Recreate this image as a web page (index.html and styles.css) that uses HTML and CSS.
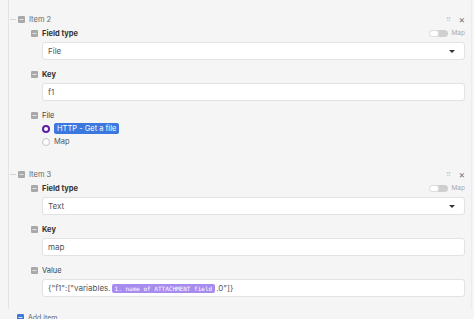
FILE: index.html
```html
<!DOCTYPE html>
<html lang="en">
<head>
  <meta charset="UTF-8" />
  <meta name="viewport" content="width=device-width, initial-scale=1.0" />
  <title>Collection items</title>
  <link rel="stylesheet" href="styles.css">
</head>
<body>
  <div class="list">
    <div class="item">
      <div class="item-head">
        <span class="branch"></span>
        <svg class="fold" viewBox="0 0 7 7"><rect width="7" height="7" rx="1" fill="#a9a9a9"/><rect x="1.5" y="3" width="4" height="1" fill="#e4e4e4"/></svg>
        <span class="item-title">Item 2</span>
        <span class="item-actions"><span class="handle">⠿</span><span class="close">×</span></span>
      </div>
      <div class="field">
        <div class="field-head">
          <svg class="fold" viewBox="0 0 7 7"><rect width="7" height="7" rx="1" fill="#a9a9a9"/><rect x="1.5" y="3" width="4" height="1" fill="#e4e4e4"/></svg>
          <span class="label bold">Field type</span>
          <span class="map"><span class="switch"><span class="knob"></span></span>Map</span>
        </div>
        <div class="input select">File<span class="caret"></span></div>
      </div>
      <div class="field">
        <div class="field-head">
          <svg class="fold" viewBox="0 0 7 7"><rect width="7" height="7" rx="1" fill="#a9a9a9"/><rect x="1.5" y="3" width="4" height="1" fill="#e4e4e4"/></svg>
          <span class="label bold">Key</span>
        </div>
        <div class="input">f1</div>
      </div>
      <div class="field">
        <div class="field-head radios-head">
          <svg class="fold" viewBox="0 0 7 7"><rect width="7" height="7" rx="1" fill="#a9a9a9"/><rect x="1.5" y="3" width="4" height="1" fill="#e4e4e4"/></svg>
          <span class="label">File</span>
        </div>
        <div class="radios">
          <div class="radio-row"><span class="radio checked"></span><span class="module">HTTP - Get a file</span></div>
          <div class="radio-row"><span class="radio"></span><span class="radio-text">Map</span></div>
        </div>
      </div>
    </div>

    <div class="item">
      <div class="item-head">
        <span class="branch"></span>
        <svg class="fold" viewBox="0 0 7 7"><rect width="7" height="7" rx="1" fill="#a9a9a9"/><rect x="1.5" y="3" width="4" height="1" fill="#e4e4e4"/></svg>
        <span class="item-title">Item 3</span>
        <span class="item-actions"><span class="handle">⠿</span><span class="close">×</span></span>
      </div>
      <div class="field">
        <div class="field-head">
          <svg class="fold" viewBox="0 0 7 7"><rect width="7" height="7" rx="1" fill="#a9a9a9"/><rect x="1.5" y="3" width="4" height="1" fill="#e4e4e4"/></svg>
          <span class="label bold">Field type</span>
          <span class="map"><span class="switch"><span class="knob"></span></span>Map</span>
        </div>
        <div class="input select">Text<span class="caret"></span></div>
      </div>
      <div class="field">
        <div class="field-head">
          <svg class="fold" viewBox="0 0 7 7"><rect width="7" height="7" rx="1" fill="#a9a9a9"/><rect x="1.5" y="3" width="4" height="1" fill="#e4e4e4"/></svg>
          <span class="label bold">Key</span>
        </div>
        <div class="input">map</div>
      </div>
      <div class="field">
        <div class="field-head">
          <svg class="fold" viewBox="0 0 7 7"><rect width="7" height="7" rx="1" fill="#a9a9a9"/><rect x="1.5" y="3" width="4" height="1" fill="#e4e4e4"/></svg>
          <span class="label">Value</span>
        </div>
        <div class="input">{"f1":["variables.<span class="pill">1. name of ATTACHMENT field</span>.0"]}</div>
      </div>
    </div>
  </div>

  <div class="add-item">
    <svg class="fold" viewBox="0 0 7 7"><rect width="7" height="7" rx="1" fill="#3f7bd6"/><rect x="1.5" y="3" width="4" height="1" fill="#cfe0fa"/></svg>
    <span>Add item</span>
  </div>
</body>
</html>
```

FILE: styles.css
```css
body {
  margin: 0;
  background-color: #f5f5f5;
  font-family: Inter, 'Noto Sans', sans-serif;
  font-size: 7.5px;
  color: #444;
  overflow: hidden;
}
.list {
  margin: 0 2px 0 8px;
  padding: 12px 0 12px;
  border-left: 1px solid #e3e3e3;
  border-right: 1px solid #ececec;
}
.fold {
  width: 7px;
  height: 7px;
  flex: none;
}
.item {
  padding-bottom: 19px;
}
.item:last-child {
  padding-bottom: 0;
}
.item-head {
  display: flex;
  align-items: center;
  height: 14px;
  padding-right: 6px;
}
.branch {
  width: 6px;
  height: 1px;
  margin: 0 2px 0 1px;
  background-color: #d6d6d6;
}
.item-title {
  margin-left: 4px;
  color: #666;
}
.item-actions {
  margin-left: auto;
  display: flex;
  align-items: center;
  gap: 7px;
  color: #9a9a9a;
}
.handle {
  font-size: 7px;
  color: #c6c6c6;
}
.close {
  font-size: 10px;
  color: #777;
}
.field {
  padding-left: 22px;
  margin-top: 7px;
}
.item-head + .field {
  margin-top: 0;
}
.field-head {
  display: flex;
  align-items: center;
  height: 14px;
  margin-bottom: 2px;
  padding-right: 6px;
}
.field-head.radios-head {
  margin-bottom: 0;
}
.label {
  margin-left: 4px;
  color: #444;
}
.bold {
  font-weight: 700;
  color: #333;
}
.map {
  margin-left: auto;
  display: flex;
  align-items: center;
  gap: 3px;
  font-size: 6.5px;
  color: #aaa;
}
.switch {
  width: 19px;
  height: 7px;
  border-radius: 4px;
  background-color: #cfcfcf;
  display: flex;
}
.knob {
  width: 10px;
  height: 7px;
  border-radius: 4px;
  background-color: #fff;
  box-shadow: 0 0 0 1px #ddd inset;
}
.input {
  margin-left: 11px;
  margin-right: 6px;
  height: 18px;
  box-sizing: border-box;
  background-color: #fff;
  border: 1px solid #e2e2e2;
  border-radius: 3px;
  padding: 0 5px;
  display: flex;
  align-items: center;
  color: #555;
  font-size: 8px;
}
.select .caret {
  margin-left: auto;
  margin-right: 4px;
  width: 0;
  height: 0;
  border-left: 3px solid transparent;
  border-right: 3px solid transparent;
  border-top: 3px solid #333;
}
.radios {
  margin-left: 11px;
}
.radio-row {
  display: flex;
  align-items: center;
  height: 13px;
}
.radio {
  width: 8px;
  height: 8px;
  box-sizing: border-box;
  border-radius: 50%;
  border: 1px solid #c4c4c4;
  background-color: #fff;
  margin-right: 4px;
}
.radio.checked {
  border: 2.5px solid #5a1ea8;
}
.module {
  background-color: #3a78e0;
  color: #fff;
  padding: 1px 3px;
  border-radius: 2px;
  font-size: 7.5px;
  line-height: 9px;
}
.radio-text {
  color: #555;
  font-size: 7.5px;
}
.pill {
  background-color: #a88bef;
  color: #fff;
  font-family: 'DejaVu Sans Mono', monospace;
  font-size: 6px;
  padding: 1px 3px;
  border-radius: 2px;
  margin: 0 1px;
  line-height: 7px;
}
.add-item {
  display: flex;
  align-items: center;
  gap: 4px;
  margin: 4px 0 0 17px;
  color: #666;
  font-size: 7px;
}
```
